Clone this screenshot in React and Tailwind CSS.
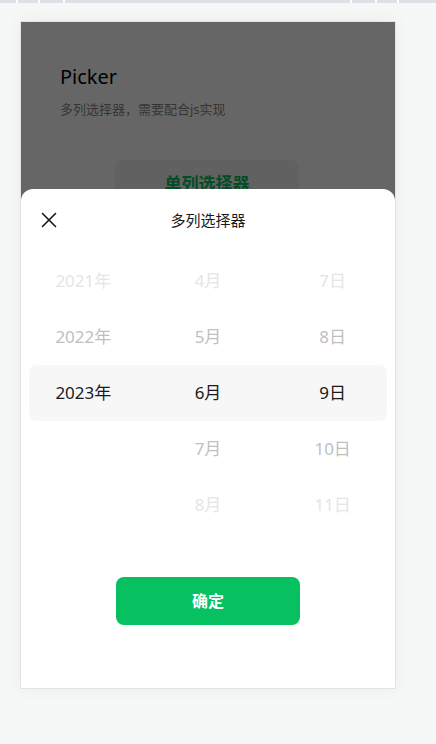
import React from 'react';

const years = ['2021年', '2022年', '2023年', '', ''];
const months = ['4月', '5月', '6月', '7月', '8月'];
const days = ['7日', '8日', '9日', '10日', '11日'];

// row color by distance from the selected (middle) row
const tone = ['text-[#e5e5e5]', 'text-[#bfbfbf]', 'text-[#1a1a1a]', 'text-[#bfbfbf]', 'text-[#e5e5e5]'];

function CloseIcon() {
    return (
        <svg width="16" height="16" viewBox="0 0 16 16" fill="none" stroke="#1a1a1a" strokeWidth="1.6" strokeLinecap="round">
            <path d="M1.5 1.5 L14.5 14.5" />
            <path d="M14.5 1.5 L1.5 14.5" />
        </svg>
    );
}

export default function App() {
    const font = { fontFamily: '"Noto Sans", "Noto Sans CJK SC", sans-serif' };
    return (
        <div className="min-h-[744px] bg-[#f6f7f7]" style={font}>
            {/* tab strip */}
            <div className="flex h-[3px] gap-[2px] bg-white">
                <div className="w-[16px] bg-[#dfe0e6]"></div>
                <div className="w-[20px] bg-[#dfe0e6]"></div>
                <div className="w-[23px] bg-[#dfe0e6]"></div>
                <div className="w-[285px] bg-[#dfe0e6]"></div>
                <div className="w-[23px] bg-[#dfe0e6]"></div>
                <div className="w-[20px] bg-[#dfe0e6]"></div>
                <div className="flex-1 bg-[#dfe0e6]"></div>
            </div>

            <div className="pt-[18px] pl-[20px]">
                <div className="relative w-[376px] h-[668px] bg-white border border-[#e3e3e3] overflow-hidden shadow-[0_0_18px_rgba(0,0,0,0.05)]">
                    {/* page content */}
                    <div className="px-[39px] pt-[41px]">
                        <h1 className="text-[20px] leading-[28px] text-black">Picker</h1>
                        <p className="mt-[9px] text-[13px] leading-[18px] text-black/50">多列选择器，需要配合js实现</p>
                        <div className="mt-[42px] flex justify-center pr-[2px]">
                            <button className="w-[184px] h-[48px] rounded-[8px] bg-[#f2f2f2] text-[#07c160] text-[17px] font-bold">单列选择器</button>
                        </div>
                    </div>

                    {/* mask */}
                    <div className="absolute inset-0 bg-black/60"></div>

                    {/* half screen dialog */}
                    <div className="absolute left-0 right-0 bottom-0 h-[499px] bg-white rounded-t-[12px]">
                        <div className="relative h-[64px] flex items-start justify-center pt-[21px]">
                            <div className="absolute left-[20px] top-[23px]">
                                <CloseIcon />
                            </div>
                            <span className="text-[15px] leading-[20px] text-[#1a1a1a]">多列选择器</span>
                        </div>

                        <div className="relative">
                            <div className="absolute left-[8px] right-[8px] top-[112px] h-[56px] rounded-[8px] bg-[#f7f7f7]"></div>
                            <div className="relative grid grid-cols-3">
                                {[years, months, days].map((col, c) => (
                                    <div key={c} className="flex flex-col">
                                        {col.map((t, i) => (
                                            <div key={i} className={`h-[56px] flex items-center justify-center text-[17px] ${tone[i]}`}>{t}</div>
                                        ))}
                                    </div>
                                ))}
                            </div>
                        </div>

                        <div className="mt-[44px] flex justify-center">
                            <button className="w-[184px] h-[48px] rounded-[8px] bg-[#07c160] text-white text-[16px] font-bold">确定</button>
                        </div>
                    </div>
                </div>
            </div>
        </div>
    );
}
